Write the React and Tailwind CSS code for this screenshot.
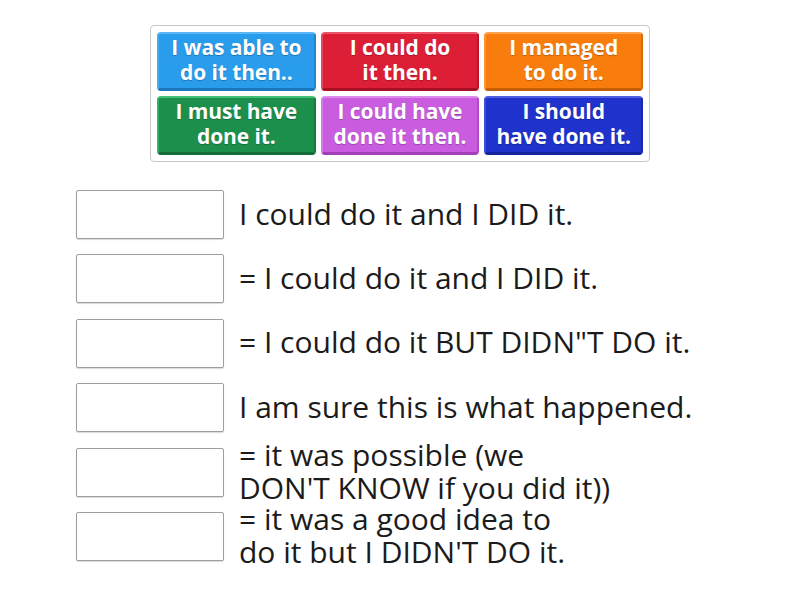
const tiles = [
  { text: ['I was able to', 'do it then..'], cls: 'bg-[#2a9cec] border-t-[#5ab6f4] border-l-[#45acf0] border-r-[#1f86d0] border-b-[#1a76bd]' },
  { text: ['I could do', 'it then.'], cls: 'bg-[#dc1f36] border-t-[#e9566a] border-l-[#e6475a] border-r-[#bd1529] border-b-[#a81123]' },
  { text: ['I managed', 'to do it.'], cls: 'bg-[#f87d0c] border-t-[#fba24f] border-l-[#fa9438] border-r-[#d86a06] border-b-[#c65f04]' },
  { text: ['I must have', 'done it.'], cls: 'bg-[#1d8f4c] border-t-[#3fc277] border-l-[#2fb266] border-r-[#167a3e] border-b-[#136d37]' },
  { text: ['I could have', 'done it then.'], cls: 'bg-[#ca5ddf] border-t-[#dc8aec] border-l-[#d67ae8] border-r-[#b14ac6] border-b-[#a33eb7]' },
  { text: ['I should', 'have done it.'], cls: 'bg-[#1f33cc] border-t-[#4d5fe0] border-l-[#3b4ed8] border-r-[#1828ad] border-b-[#15239c]' },
];

const rows = [
  ['I could do it and I DID it.'],
  ['= I could do it and I DID it.'],
  ['= I could do it BUT DIDN"T DO it.'],
  ['I am sure this is what happened.'],
  ['= it was possible (we', "DON'T KNOW if you did it))"],
  ['= it was a good idea to', "do it but I DIDN'T DO it."],
];

const Tile = ({ tile }) => (
  <div
    className={`h-[59px] rounded-[4px] border-[2px] border-b-[3px] pb-[2px] flex flex-col items-center justify-center text-white font-bold text-[21px] leading-[25px] tracking-[-0.1px] whitespace-nowrap [text-shadow:0_1px_1px_rgba(0,0,0,0.25)] ${tile.cls}`}
  >
    {tile.text.map((t) => (
      <span key={t}>{t}</span>
    ))}
  </div>
);

export default function App() {
  return (
    <div className="w-[800px] h-[600px] bg-white font-['Open_Sans',sans-serif] text-[#1b1b1b]">
      <div className="pt-[25px]">
        <div className="mx-auto w-[500px] border border-[#c9c9c9] rounded-[4px] p-[6px] grid grid-cols-3 gap-x-[5px] gap-y-[5px]">
          {tiles.map((tile, i) => (
            <Tile key={i} tile={tile} />
          ))}
        </div>
      </div>

      <div className="mt-[28px] pl-[76px] flex flex-col gap-[15.4px]">
        {rows.map((lines, i) => (
          <div key={i} className="flex items-center h-[49px]">
            <div className="w-[148px] h-[49px] shrink-0 border border-[#9e9e9e] rounded-[2px] bg-white shadow-[0_1px_1px_rgba(0,0,0,0.15)]" />
            <div className="ml-[15px] pb-[3px] text-[30px] leading-[33px] whitespace-nowrap">
              {lines.map((l) => (
                <div key={l}>{l}</div>
              ))}
            </div>
          </div>
        ))}
      </div>
    </div>
  );
}
